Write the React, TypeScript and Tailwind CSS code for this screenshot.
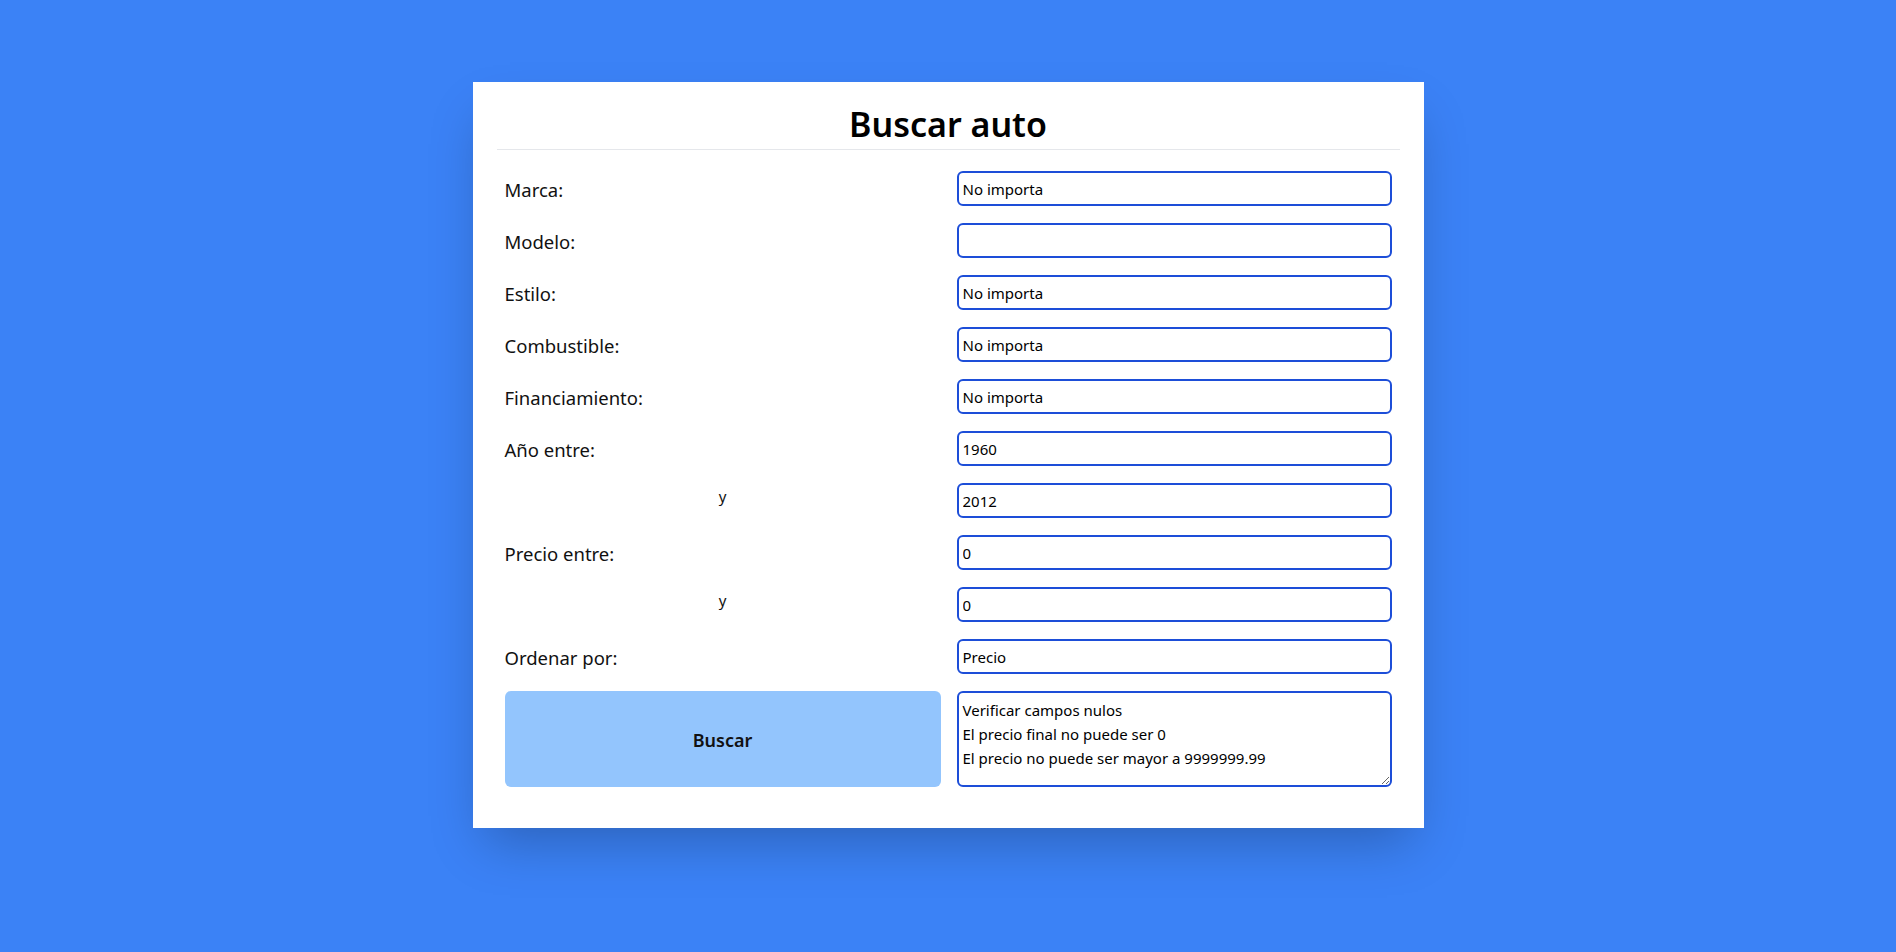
import React from "react";

const rows: { label: string; value: string; small?: boolean }[] = [
  { label: "Marca:", value: "No importa" },
  { label: "Modelo:", value: "" },
  { label: "Estilo:", value: "No importa" },
  { label: "Combustible:", value: "No importa" },
  { label: "Financiamiento:", value: "No importa" },
  { label: "Año entre:", value: "1960" },
  { label: "y", value: "2012", small: true },
  { label: "Precio entre:", value: "0" },
  { label: "y", value: "0", small: true },
  { label: "Ordenar por:", value: "Precio" },
];

export default function App() {
  return (
    <div className="min-h-screen bg-[#3b82f6] pt-[82px] pb-10 font-['Noto_Sans',sans-serif] text-[#111]">
      <div className="mx-auto w-[951px] bg-white px-6 pb-[41px] shadow-2xl">
        <div className="flex h-[68px] items-end justify-center border-b border-[#e5e7eb] pb-[0px]">
          <h1 className="text-[34px] font-semibold leading-[50px] text-black">Buscar auto</h1>
        </div>
        <div className="grid grid-cols-[436px_435px] gap-x-4 gap-y-[17px] px-2 pt-[21px]">
          {rows.map((r, i) => (
            <React.Fragment key={i}>
              {r.small ? (
                <div className="h-[35px] pt-[1px] text-center text-[15px] leading-6">{r.label}</div>
              ) : (
                <div className="flex h-[35px] items-center pt-[2px] text-[18.5px]">{r.label}</div>
              )}
              <input
                type="text"
                defaultValue={r.value}
                className="h-[35px] w-full rounded-md border-2 border-[#1d4ed8] bg-white px-1 text-[15px] text-black outline-none"
              />
            </React.Fragment>
          ))}
          <button className="h-[96px] rounded-md bg-[#93c5fd] pt-[2px] text-[18px] font-semibold text-[#111]">
            Buscar
          </button>
          <textarea
            readOnly
            defaultValue={"Verificar campos nulos\nEl precio final no puede ser 0\nEl precio no puede ser mayor a 9999999.99"}
            className="h-[96px] w-full rounded-md border-2 border-[#1d4ed8] px-1 pt-[5px] pb-0 text-[15px] leading-6 text-black outline-none"
          />
        </div>
      </div>
    </div>
  );
}
